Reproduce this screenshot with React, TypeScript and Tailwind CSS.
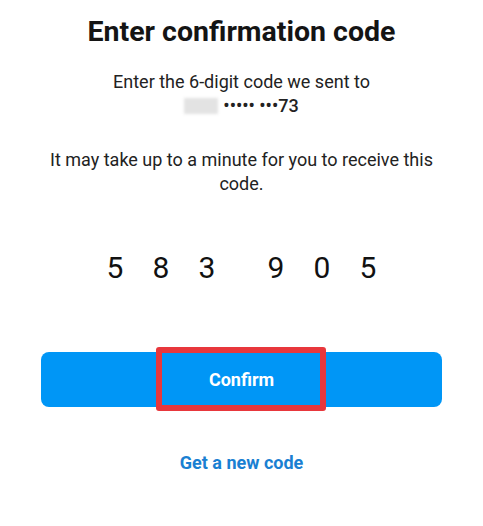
export default function App() {
  const first = ["5", "8", "3"];
  const second = ["9", "0", "5"];

  return (
    <div className="w-[483px] h-[526px] bg-white flex flex-col items-center font-['Roboto',_'Liberation_Sans',_sans-serif] text-[#1c1c1c]">
      <h1 className="pt-[15px] text-[28.5px] leading-[34px] font-bold text-[#141414]">Enter confirmation code</h1>

      <div className="mt-[21px] flex flex-col items-center text-[18px] leading-[24px] text-[#222]">
        <p>Enter the 6-digit code we sent to</p>
        <p className="flex items-center gap-[5px]">
          <span className="inline-block w-[34px] h-[16px] bg-[#e3e3e3] blur-[1.5px]" />
          <span className="font-medium">••••• •••73</span>
        </p>
      </div>

      <p className="mt-[30px] w-[410px] text-center text-[18px] leading-[24px] text-[#222]">
        It may take up to a minute for you to receive this code.
      </p>

      <div className="mt-[54px] flex gap-[23px] text-[30px] leading-[36px] text-[#111]">
        <div className="flex">
          {first.map((d, i) => (
            <span key={i} className="w-[46px] text-center">{d}</span>
          ))}
        </div>
        <div className="flex">
          {second.map((d, i) => (
            <span key={i} className="w-[46px] text-center">{d}</span>
          ))}
        </div>
      </div>

      <div className="relative mt-[66px] w-[401px]">
        <button
          type="button"
          className="w-full h-[55px] rounded-[8px] bg-[#0096f6] text-white text-[18px] font-bold"
        >
          Confirm
        </button>
        <div className="absolute left-[115px] top-[-5px] w-[170px] h-[64px] border-[6px] border-[#e8373c] rounded-[3px] pointer-events-none" />
      </div>

      <a className="mt-[44px] text-[18px] leading-[24px] font-bold text-[#1a80d2]">Get a new code</a>
    </div>
  );
}
